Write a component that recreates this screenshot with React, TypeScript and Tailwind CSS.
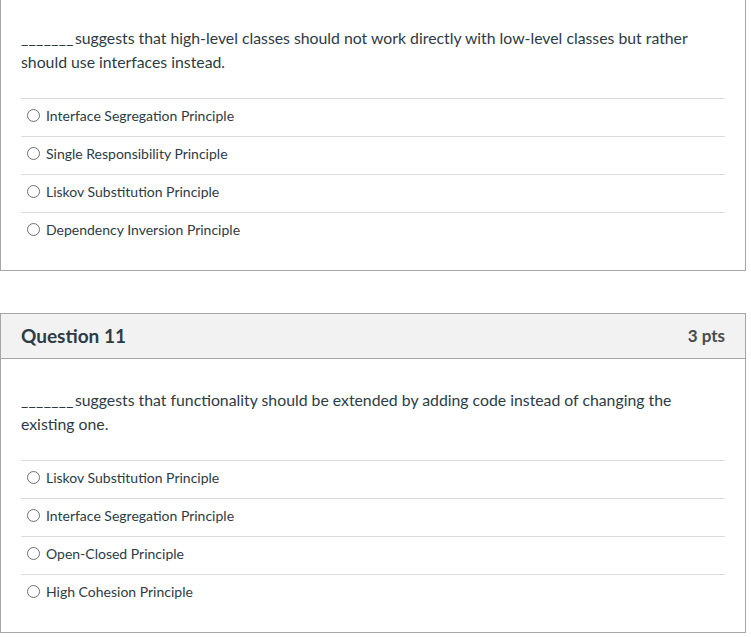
import React from 'react';

type Question = {
  id: number;
  pts: string;
  prompt: string;
  options: string[];
};

const questions: Question[] = [
  {
    id: 10,
    pts: '3 pts',
    prompt:
      'suggests that high-level classes should not work directly with low-level classes but rather should use interfaces instead.',
    options: [
      'Interface Segregation Principle',
      'Single Responsibility Principle',
      'Liskov Substitution Principle',
      'Dependency Inversion Principle',
    ],
  },
  {
    id: 11,
    pts: '3 pts',
    prompt:
      'suggests that functionality should be extended by adding code instead of changing the existing one.',
    options: [
      'Liskov Substitution Principle',
      'Interface Segregation Principle',
      'Open-Closed Principle',
      'High Cohesion Principle',
    ],
  },
];

const QuestionCard: React.FC<{ q: Question; className?: string }> = ({ q, className = '' }) => (
  <div className={`w-[746px] border border-[#a6a6a6] bg-white ${className}`}>
    {/* Header */}
    <div className="h-[45px] flex items-center justify-between px-5 bg-[#f2f2f2] border-b border-[#a6a6a6] text-[#2d3b45]">
      <h3 className="text-[19px] font-bold">Question {q.id}</h3>
      <span className="text-[17px] font-bold text-[#4a4a4a]">{q.pts}</span>
    </div>

    {/* Body */}
    <div className="px-5 pt-[29px] pb-5">
      <p className="text-[15.8px] leading-6 text-[#2d3b45] pr-8">
        <span className="tracking-[0.3px] mr-[-3px]">_______</span> {q.prompt}
      </p>

      <div className="mt-6">
        {q.options.map((opt) => (
          <label
            key={opt}
            className="h-[38px] flex items-center gap-[6px] border-t border-[#dcdcdc] pl-[6px] pb-[5px] text-[14px] text-[#2d3b45]"
          >
            <span className="w-[13px] h-[13px] rounded-full border border-[#6f6f6f] bg-white shrink-0" />
            {opt}
          </label>
        ))}
      </div>
    </div>
  </div>
);

export default function App() {
  return (
    <div className="w-[751px] h-[637px] overflow-hidden bg-white font-['Lato','Noto_Sans',sans-serif]">
      <QuestionCard q={questions[0]} className="-mt-[49px]" />
      <QuestionCard q={questions[1]} className="mt-[42px]" />
    </div>
  );
}
